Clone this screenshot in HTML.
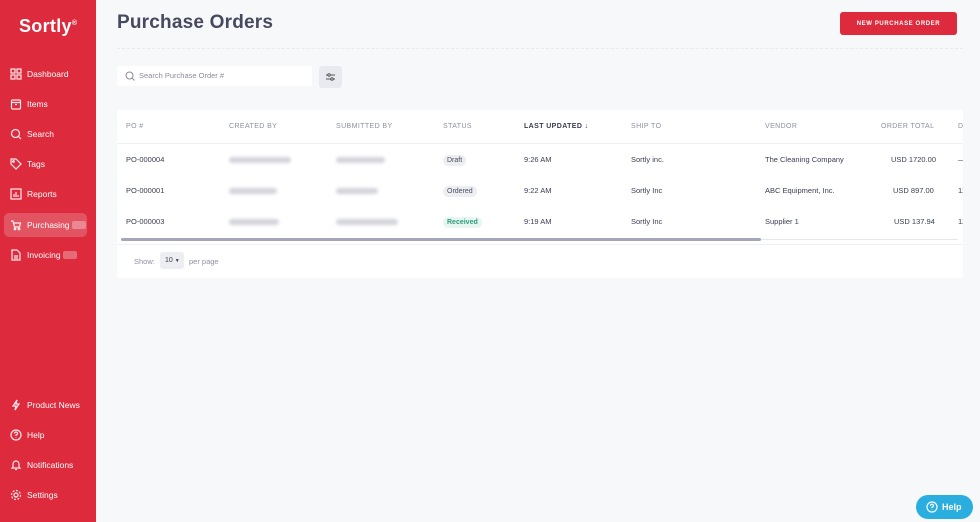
<!DOCTYPE html>
<html><head><meta charset="utf-8">
<style>
*{box-sizing:border-box;margin:0;padding:0}
body{width:980px;height:522px;overflow:hidden;background:#f6f8fa;font-family:"Liberation Sans",sans-serif;position:relative;color:#3a3d52}
.side{position:absolute;left:0;top:0;width:96px;height:522px;background:#dd2a3d}
.logo{position:absolute;left:19px;top:16px;color:#fff;font:bold 18px "Liberation Sans",sans-serif;letter-spacing:0.3px}
.logo sup{font-size:7px}
.nav{position:absolute;left:0;width:96px;height:24px;color:#fff;font-size:8.5px;display:flex;align-items:center}
.nav svg{position:absolute;left:10px;top:6px;width:12px;height:12px;fill:none;stroke:#fff;stroke-width:1.2;opacity:.9}
.nav span{position:absolute;left:27px}
.act{left:4px;width:83px;background:rgba(255,255,255,.2);border-radius:5px}
.act svg{left:6px}.act span{left:23px}
.pill{position:absolute;width:14px;height:8px;background:rgba(255,255,255,.3);border-radius:2px}
h1{position:absolute;left:117px;top:12px;font-size:19px;font-weight:bold;color:#474a5e;letter-spacing:.2px}
.hr{position:absolute;left:117px;top:48px;width:846px;border-top:1px dashed #e8eaee}
.btn{position:absolute;left:840px;top:12px;width:117px;height:23px;background:#dd2a3d;border-radius:3px;color:#fff;font-size:6px;font-weight:bold;letter-spacing:.6px;text-align:center;line-height:24px}
.search{position:absolute;left:117px;top:66px;width:195px;height:20px;background:#fff;border-radius:3px;font-size:7.5px;color:#8a8d9c;line-height:20px;padding-left:22px}
.search svg{position:absolute;left:8px;top:5px}
.filt{position:absolute;left:319px;top:66px;width:23px;height:22px;background:#e9eaef;border-radius:3px}
.card{position:absolute;left:117px;top:110px;width:846px;height:168px;background:#fff;border-radius:3px;overflow:hidden}
.c{position:absolute;font-size:7.5px;color:#3a3d52;white-space:nowrap}
.h{font-size:7px;color:#8d90a0;letter-spacing:.4px;top:13px}
.line{position:absolute;left:0;width:846px;border-top:1px solid #eef0f3}
.blur{position:absolute;height:6px;background:#d3d4da;border-radius:3px;filter:blur(1.5px)}
.tag{position:absolute;font-size:7px;padding:2px 4px;border-radius:6px;background:#eceef2;color:#4a4d60}
.help{position:absolute;left:916px;top:495px;width:57px;height:24px;background:#2aaee0;border-radius:12px;color:#fff;font-size:9px;font-weight:bold;line-height:24px;padding-left:26px}
</style></head><body>
<div class="side">
<div class="logo">Sortly<sup>®</sup></div>
<div class="nav" style="top:62px"><svg viewBox="0 0 12 12"><rect x="1" y="1" width="4" height="4"/><rect x="7" y="1" width="4" height="4"/><rect x="1" y="7" width="4" height="4"/><rect x="7" y="7" width="4" height="4"/></svg><span>Dashboard</span></div>
<div class="nav" style="top:92px"><svg viewBox="0 0 12 12"><rect x="1.5" y="2" width="9" height="9" rx="1"/><path d="M1.5 4.5h9M5 6.5h2"/></svg><span>Items</span></div>
<div class="nav" style="top:122px"><svg viewBox="0 0 12 12"><circle cx="5.5" cy="5.5" r="4"/><path d="M8.5 8.5l2.5 2.5"/></svg><span>Search</span></div>
<div class="nav" style="top:152px"><svg viewBox="0 0 12 12"><path d="M1 1h5l5 5-5 5-5-5z"/><circle cx="3.5" cy="3.5" r=".8"/></svg><span>Tags</span></div>
<div class="nav" style="top:182px"><svg viewBox="0 0 12 12"><rect x="1" y="1" width="10" height="10"/><path d="M4 9V6M6 9V4M8 9V7"/></svg><span>Reports</span></div>
<div class="nav act" style="top:213px"><svg viewBox="0 0 12 12"><path d="M1 2h2l1.5 6h5l1-4H4"/><circle cx="5" cy="10" r=".8"/><circle cx="9" cy="10" r=".8"/></svg><span>Purchasing</span><div class="pill" style="left:68px;top:8px"></div></div>
<div class="nav" style="top:243px"><svg viewBox="0 0 12 12"><path d="M2 1h5l3 3v7H2z"/><path d="M4 7h4M4 9h4"/></svg><span>Invoicing</span><div class="pill" style="left:63px;top:8px"></div></div>
<div class="nav" style="top:393px"><svg viewBox="0 0 12 12"><path d="M7 1L3 7h3l-1 4 4-6H6z"/></svg><span>Product News</span></div>
<div class="nav" style="top:423px"><svg viewBox="0 0 12 12"><circle cx="6" cy="6" r="5"/><path d="M4.5 4.5a1.5 1.5 0 1 1 1.5 1.5v1M6 8.5v.5"/></svg><span>Help</span></div>
<div class="nav" style="top:453px"><svg viewBox="0 0 12 12"><path d="M3 8V5a3 3 0 0 1 6 0v3l1 1H2z"/><path d="M5 10.5h2"/></svg><span>Notifications</span></div>
<div class="nav" style="top:483px"><svg viewBox="0 0 12 12"><circle cx="6" cy="6" r="2"/><circle cx="6" cy="6" r="4.5" stroke-dasharray="2 1.5"/></svg><span>Settings</span></div>
</div>
<h1>Purchase Orders</h1>
<div class="btn">NEW PURCHASE ORDER</div>
<div class="hr"></div>
<div class="search"><svg width="10" height="10" viewBox="0 0 10 10" fill="none" stroke="#8a8d9c" stroke-width="1"><circle cx="4.5" cy="4.5" r="3.5"/><path d="M7 7l2.5 2.5"/></svg>Search Purchase Order #</div>
<div class="filt"><svg width="23" height="22" viewBox="0 0 23 22" fill="none" stroke="#555" stroke-width="1"><path d="M7 9h9M7 13h9"/><circle cx="10" cy="9" r="1.2" fill="#e9eaef"/><circle cx="13" cy="13" r="1.2" fill="#e9eaef"/></svg></div>
<div class="card">
<div class="c h" style="left:9px">PO #</div>
<div class="c h" style="left:112px">CREATED BY</div>
<div class="c h" style="left:219px">SUBMITTED BY</div>
<div class="c h" style="left:326px">STATUS</div>
<div class="c h" style="left:407px;color:#3a3d52;font-weight:bold">LAST UPDATED ↓</div>
<div class="c h" style="left:514px">SHIP TO</div>
<div class="c h" style="left:648px">VENDOR</div>
<div class="c h" style="left:764px">ORDER TOTAL</div>
<div class="c h" style="left:841px">DATE</div>
<div class="line" style="top:33px"></div>

<div class="c" style="left:9px;top:45px">PO-000004</div>
<div class="blur" style="left:112px;top:47px;width:62px"></div>
<div class="blur" style="left:219px;top:47px;width:49px"></div>
<div class="tag" style="left:326px;top:45px">Draft</div>
<div class="c" style="left:407px;top:45px">9:26 AM</div>
<div class="c" style="left:514px;top:45px">Sortly inc.</div>
<div class="c" style="left:648px;top:45px">The Cleaning Company</div>
<div class="c" style="left:774px;top:45px">USD 1720.00</div>
<div class="c" style="left:841px;top:45px">—</div>

<div class="c" style="left:9px;top:76px">PO-000001</div>
<div class="blur" style="left:112px;top:78px;width:48px"></div>
<div class="blur" style="left:219px;top:78px;width:42px"></div>
<div class="tag" style="left:326px;top:76px">Ordered</div>
<div class="c" style="left:407px;top:76px">9:22 AM</div>
<div class="c" style="left:514px;top:76px">Sortly Inc</div>
<div class="c" style="left:648px;top:76px">ABC Equipment, Inc.</div>
<div class="c" style="left:776px;top:76px">USD 897.00</div>
<div class="c" style="left:841px;top:76px">12/01/23</div>

<div class="c" style="left:9px;top:107px">PO-000003</div>
<div class="blur" style="left:112px;top:109px;width:50px"></div>
<div class="blur" style="left:219px;top:109px;width:62px"></div>
<div class="tag" style="left:326px;top:107px;background:#e6f6f1;color:#2f9c7a;font-weight:bold">Received</div>
<div class="c" style="left:407px;top:107px">9:19 AM</div>
<div class="c" style="left:514px;top:107px">Sortly Inc</div>
<div class="c" style="left:648px;top:107px">Supplier 1</div>
<div class="c" style="left:777px;top:107px">USD 137.94</div>
<div class="c" style="left:841px;top:107px">12/02/23</div>

<div style="position:absolute;left:4px;top:129px;width:837px;height:1px;background:#e6e7ec"></div>
<div style="position:absolute;left:4px;top:128px;width:640px;height:3px;background:#a4a6bc;border-radius:2px"></div>
<div class="line" style="top:134px"></div>
<div class="c" style="left:17px;top:147px;color:#8d90a0">Show:</div>
<div style="position:absolute;left:43px;top:142px;width:24px;height:17px;background:#eceef2;border-radius:3px;font-size:7px;line-height:17px;padding-left:5px">10 <span style="font-size:5px">▼</span></div>
<div class="c" style="left:72px;top:147px;color:#8d90a0">per page</div>
</div>
<div class="help"><svg style="position:absolute;left:10px;top:6px" width="12" height="12" viewBox="0 0 12 12" fill="none" stroke="#fff" stroke-width="1.2"><circle cx="6" cy="6" r="5"/><path d="M4.5 4.7a1.5 1.5 0 1 1 1.5 1.5v.8M6 8.6v.4"/></svg>Help</div>
</body></html>
